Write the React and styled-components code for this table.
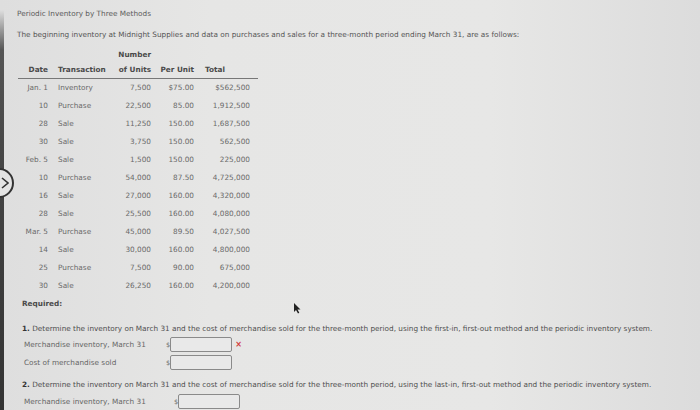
import React from 'react';
import styled, { createGlobalStyle } from 'styled-components';

const Global = createGlobalStyle`
  html, body { margin: 0; padding: 0; }
  body {
    width: 700px;
    height: 410px;
    overflow: hidden;
    background: #e3e3e3;
    font-family: "DejaVu Sans", Verdana, sans-serif;
  }
`;

const Screen = styled.div`
  position: relative;
  width: 700px;
  height: 410px;
  background: linear-gradient(90deg, #dedede 0%, #e6e6e5 30%, #e7e7e6 70%, #dcdcdc 100%);
  color: #555;
  font-size: 7.3px;
  overflow: hidden;
`;

const EdgeBar = styled.div`
  position: absolute;
  left: 0;
  top: 10px;
  width: 4px;
  height: 400px;
  background: linear-gradient(180deg, rgba(60, 60, 60, 0) 0%, #555 10%, #444 40%, #333 100%);
`;

const NavCircle = styled.div`
  position: absolute;
  left: -16px;
  top: 168px;
  width: 30px;
  height: 30px;
  border: 2px solid #333;
  border-radius: 50%;
  background: #e4e4e4;
  display: flex;
  align-items: center;
  justify-content: flex-end;
  padding-right: 3px;
  box-sizing: border-box;
`;

const Content = styled.div`
  padding: 9px 0 0 17px;
  display: flex;
  flex-direction: column;
`;

const Title = styled.div`
  color: #5c5c5c;
  line-height: 9px;
`;

const Intro = styled.div`
  margin-top: 12px;
  color: #555;
  line-height: 9px;
  white-space: nowrap;
`;

const Table = styled.div`
  margin: 8px 0 0 1px;
  width: 240px;
  display: grid;
  grid-template-columns: 32px 60px 41px 43px 64px;
`;

const Head = styled.div`
  font-weight: bold;
  color: #4a4a4a;
  line-height: 15px;
  text-align: ${p => p.$align || 'right'};
  padding-left: ${p => p.$pl || 0}px;
  padding-right: ${p => p.$pr || 0}px;
  border-bottom: 1px solid #777;
  display: flex;
  flex-direction: column;
  justify-content: flex-end;
  padding-bottom: 1px;
  white-space: nowrap;
`;

const Cell = styled.div`
  color: #6a6a6a;
  line-height: 18px;
  text-align: ${p => p.$align || 'right'};
  padding-left: ${p => p.$pl || 0}px;
  padding-right: ${p => p.$pr || 0}px;
  white-space: nowrap;
`;

const Required = styled.div`
  margin-top: 4px;
  margin-left: 5px;
  font-weight: bold;
  color: #4a4a4a;
  line-height: 9px;
`;

const Step = styled.div`
  margin-left: 5px;
  margin-top: ${p => p.$mt}px;
  color: #4f4f4f;
  line-height: 9px;
  white-space: nowrap;
  b { color: #333; }
`;

const AnswerRow = styled.div`
  margin-left: 7px;
  margin-top: ${p => p.$mt}px;
  display: flex;
  align-items: center;
  height: 15px;
  color: #666;
`;

const Label = styled.div`
  width: ${p => p.$w}px;
`;

const Dollar = styled.span`
  color: #777;
  font-size: 6.5px;
`;

const Input = styled.div`
  width: 60px;
  height: 13px;
  border: 1px solid #8a8a8a;
  border-radius: 2px;
  background: #e9e9e9;
`;

const Cross = styled.span`
  color: #d23b3b;
  font-weight: bold;
  font-size: 8px;
  margin-left: 3px;
`;

const Pointer = styled.svg`
  position: absolute;
  left: 293px;
  top: 303px;
`;

const rows = [
  ['Jan. 1', 'Inventory', '7,500', '$75.00', '$562,500'],
  ['10', 'Purchase', '22,500', '85.00', '1,912,500'],
  ['28', 'Sale', '11,250', '150.00', '1,687,500'],
  ['30', 'Sale', '3,750', '150.00', '562,500'],
  ['Feb. 5', 'Sale', '1,500', '150.00', '225,000'],
  ['10', 'Purchase', '54,000', '87.50', '4,725,000'],
  ['16', 'Sale', '27,000', '160.00', '4,320,000'],
  ['28', 'Sale', '25,500', '160.00', '4,080,000'],
  ['Mar. 5', 'Purchase', '45,000', '89.50', '4,027,500'],
  ['14', 'Sale', '30,000', '160.00', '4,800,000'],
  ['25', 'Purchase', '7,500', '90.00', '675,000'],
  ['30', 'Sale', '26,250', '160.00', '4,200,000'],
];

export default function App() {
  return (
    <Screen>
      <Global />
      <EdgeBar />
      <NavCircle>
        <svg width="8" height="12" viewBox="0 0 8 12">
          <path d="M1 1 L7 6 L1 11" fill="none" stroke="#333" strokeWidth="1.6" />
        </svg>
      </NavCircle>
      <Pointer width="8" height="11" viewBox="0 0 8 11">
        <path d="M1 0 L1 9 L3 7 L5 10.5 L6.3 9.8 L4.5 6.6 L7.5 6.6 Z" fill="#222" />
      </Pointer>
      <Content>
        <Title>Periodic Inventory by Three Methods</Title>
        <Intro>
          The beginning inventory at Midnight Supplies and data on purchases and sales for a three-month period ending March 31, are as follows:
        </Intro>
        <Table>
          <Head $pr={2}>Date</Head>
          <Head $align="left" $pl={8}>Transaction</Head>
          <Head><span>Number</span><span>of Units</span></Head>
          <Head>Per Unit</Head>
          <Head $align="left" $pl={11}>Total</Head>
          {rows.map((r, i) => (
            <React.Fragment key={i}>
              <Cell $pr={2}>{r[0]}</Cell>
              <Cell $align="left" $pl={8}>{r[1]}</Cell>
              <Cell>{r[2]}</Cell>
              <Cell>{r[3]}</Cell>
              <Cell $pr={8}>{r[4]}</Cell>
            </React.Fragment>
          ))}
        </Table>
        <Required>Required:</Required>
        <Step $mt={16}>
          <b>1.</b> Determine the inventory on March 31 and the cost of merchandise sold for the three-month period, using the first-in, first-out method and the periodic inventory system.
        </Step>
        <AnswerRow $mt={4}>
          <Label $w={142}>Merchandise inventory, March 31</Label>
          <Dollar>$</Dollar>
          <Input />
          <Cross>×</Cross>
        </AnswerRow>
        <AnswerRow $mt={3}>
          <Label $w={142}>Cost of merchandise sold</Label>
          <Dollar>$</Dollar>
          <Input />
        </AnswerRow>
        <Step $mt={10}>
          <b>2.</b> Determine the inventory on March 31 and the cost of merchandise sold for the three-month period, using the last-in, first-out method and the periodic inventory system.
        </Step>
        <AnswerRow $mt={5}>
          <Label $w={150}>Merchandise inventory, March 31</Label>
          <Dollar>$</Dollar>
          <Input />
        </AnswerRow>
      </Content>
    </Screen>
  );
}
